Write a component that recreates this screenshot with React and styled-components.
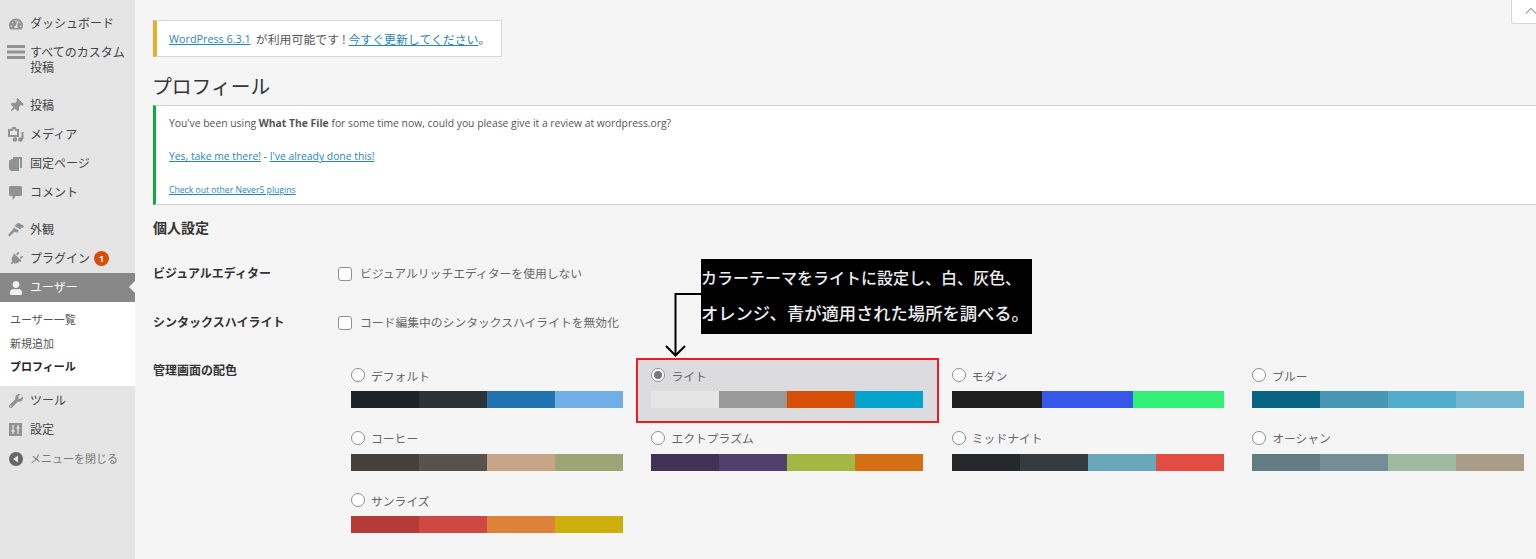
import React from "react";
import styled, { createGlobalStyle } from "styled-components";
import {
  FaTachometerAlt,
  FaThumbtack,
  FaPlug,
  FaUser,
  FaWrench,
} from "react-icons/fa";

const GlobalStyle = createGlobalStyle`
  html, body {
    margin: 0;
    padding: 0;
    background: #f5f5f5;
    font-family: "Open Sans", "Noto Sans CJK JP", sans-serif;
    color: #444;
  }
`;

const Page = styled.div`
  position: relative;
  display: flex;
  width: 1536px;
  height: 559px;
  overflow: hidden;
`;

const Sidebar = styled.nav`
  width: 135px;
  flex-shrink: 0;
  background: #e5e5e5;
  padding-top: 9px;
  box-sizing: border-box;
`;

const MenuItem = styled.div`
  display: flex;
  align-items: ${({ $tall }) => ($tall ? "flex-start" : "center")};
  height: ${({ $tall }) => ($tall ? "43px" : "29px")};
  margin-top: ${({ $gap }) => $gap || 0}px;
  padding-top: ${({ $tall }) => ($tall ? "7px" : "0")};
  box-sizing: border-box;
  position: relative;
  font-size: ${({ $muted }) => ($muted ? "11px" : "12px")};
  line-height: 15px;
  color: ${({ $active, $muted }) => ($active ? "#fff" : $muted ? "#777" : "#444")};
  background: ${({ $active }) => ($active ? "#888" : "transparent")};
  &:after {
    content: "";
    display: ${({ $active }) => ($active ? "block" : "none")};
    position: absolute;
    right: 0;
    top: 8px;
    border: 6px solid transparent;
    border-right-color: #f5f5f5;
    border-left: 0;
  }
`;

const IconSlot = styled.span`
  width: 30px;
  flex-shrink: 0;
  display: flex;
  justify-content: center;
  color: ${({ $active, $dark }) => ($active ? "#f1f1f1" : $dark ? "#666" : "#929292")};
  font-size: 14px;
  padding-left: 1px;
  box-sizing: border-box;
`;

const TiltedPin = styled(FaThumbtack)`
  transform: rotate(45deg);
`;

const TiltedPlug = styled(FaPlug)`
  transform: rotate(45deg);
`;

const Badge = styled.span`
  width: 15px;
  height: 15px;
  border-radius: 50%;
  margin-left: 4px;
  background: #d64e07;
  color: #fff;
  font-size: 9px;
  font-weight: 700;
  line-height: 15px;
  text-align: center;
`;

const Submenu = styled.div`
  background: #fff;
  padding: 6px 0 7px 10px;
`;

const SubItem = styled.div`
  height: 23.7px;
  line-height: 23.7px;
  font-size: 11px;
  color: ${({ $current }) => ($current ? "#222" : "#555")};
  font-weight: ${({ $current }) => ($current ? 700 : 400)};
`;

const Main = styled.main`
  flex: 1;
  min-width: 0;
  padding: 20px 0 0 18px;
`;

const UpdateNotice = styled.div`
  width: 349px;
  height: 37px;
  box-sizing: border-box;
  background: #fff;
  border: 1px solid #d6d6d6;
  border-left: 4px solid #e5ae2f;
  padding-left: 12px;
  display: flex;
  align-items: center;
  font-size: 11.9px;
  color: #555;
  white-space: nowrap;
`;

const Link = styled.a`
  color: #2a86b8;
  text-decoration: underline;
  font-size: ${({ $size }) => ($size ? `${$size}px` : "inherit")};
`;

const NoticeText = styled.span`
  margin-left: 2px;
`;

const Title = styled.h1`
  margin: 15px 0 0 -1px;
  height: 33px;
  font-size: 19.8px;
  line-height: 30px;
  font-weight: 400;
  color: #333;
`;

const ReviewNotice = styled.div`
  height: 100px;
  box-sizing: border-box;
  background: #fff;
  border-top: 1px solid #d0d0d0;
  border-bottom: 1px solid #d0d0d0;
  border-left: 3px solid #0cab3f;
  padding: 7px 0 0 13px;
  font-size: 10.35px;
  color: #555;
`;

const ReviewLine = styled.div`
  height: 33px;
  line-height: 20px;
`;

const SectionTitle = styled.h2`
  margin: 13px 0 0;
  font-size: 14px;
  line-height: 19px;
  font-weight: 700;
  color: #333;
`;

const SettingRow = styled.div`
  display: grid;
  grid-template-columns: 184px 1fr;
  margin-top: ${({ $gap }) => $gap}px;
`;

const RowLabel = styled.div`
  font-size: 12px;
  line-height: 20px;
  font-weight: 700;
  color: #333;
  padding-top: ${({ $pad }) => $pad || 0}px;
`;

const CheckLine = styled.label`
  display: flex;
  align-items: center;
  height: 20px;
  font-size: 11.8px;
  line-height: 18px;
  color: #666;
  padding-left: 1px;
`;

const CheckText = styled.span`
  margin-bottom: 2px;
`;

const Checkbox = styled.span`
  width: 14px;
  height: 14px;
  box-sizing: border-box;
  border: 1px solid #8c8f94;
  border-radius: 3px;
  background: #fff;
  margin-right: 8px;
`;

const SchemeGrid = styled.div`
  display: grid;
  grid-template-columns: repeat(4, 300.4px);
  grid-auto-rows: 62.6px;
`;

const Scheme = styled.div`
  padding: 6px 14.4px 0 14px;
  box-sizing: border-box;
  background: ${({ $selected }) => ($selected ? "#dcdcde" : "transparent")};
  outline: ${({ $selected }) => ($selected ? "2px solid #ed1c24" : "none")};
  outline-offset: -1px;
`;

const SchemeLabel = styled.div`
  display: flex;
  align-items: center;
  height: 20px;
  font-size: 11.8px;
  color: #666;
  margin-bottom: 6px;
`;

const Radio = styled.span`
  width: 14px;
  height: 14px;
  box-sizing: border-box;
  border: 1px solid #8c8f94;
  border-radius: 50%;
  background: #fff;
  margin-right: 6px;
  display: flex;
  align-items: center;
  justify-content: center;
  &:after {
    content: "";
    display: ${({ $checked }) => ($checked ? "block" : "none")};
    width: 8px;
    height: 8px;
    border-radius: 50%;
    background: #777;
  }
`;

const Swatches = styled.div`
  display: flex;
  height: 17px;
`;

const Swatch = styled.div`
  flex: 1;
  background: ${({ $color }) => $color};
`;

const CollapseTab = styled.div`
  position: absolute;
  top: -1px;
  right: -2px;
  width: 27px;
  height: 25px;
  background: #fff;
  border: 1px solid #d6d6d6;
  border-radius: 0 0 0 3px;
  display: flex;
  padding: 7px 0 0 13px;
  box-sizing: border-box;
`;

const Callout = styled.div`
  position: absolute;
  left: 701px;
  top: 259px;
  width: 331px;
  height: 75px;
  box-sizing: border-box;
  background: #000;
  color: #eee;
  font-weight: 500;
  padding-top: 1px;
  white-space: nowrap;
`;

const CalloutLine = styled.div`
  font-size: ${({ $size }) => $size}px;
  line-height: 36px;
`;

const CalloutArrow = styled.svg`
  position: absolute;
  left: 665px;
  top: 290px;
`;

const MediaIcon = () => (
  <svg width="17" height="15" viewBox="0 0 17 15" fill="none" stroke="currentColor" strokeWidth="2">
    <path d="M2 3h3l1-2h2l1 2h2v6H2z" />
    <path d="M15.5 5v7" />
    <circle cx="13.5" cy="12.5" r="1.3" fill="currentColor" />
    <circle cx="8" cy="12.5" r="1.3" fill="currentColor" />
  </svg>
);

const BarsIcon = () => (
  <svg width="18" height="14" viewBox="0 0 18 14" fill="currentColor">
    <rect y="0" width="18" height="3" />
    <rect y="5.5" width="18" height="3" />
    <rect y="11" width="18" height="3" />
  </svg>
);

const PagesIcon = () => (
  <svg width="13" height="14" viewBox="0 0 13 14" fill="currentColor">
    <path d="M4 0h9v11h-2V2H4z" />
    <path d="M0 3.5L3 2h7v12H2L0 12z" />
  </svg>
);

const BubbleIcon = () => (
  <svg width="13" height="14" viewBox="0 0 13 14" fill="currentColor">
    <path d="M1.5 0h10A1.5 1.5 0 0 1 13 1.5v7a1.5 1.5 0 0 1-1.5 1.5H7l-3.5 4v-4h-2A1.5 1.5 0 0 1 0 8.5v-7A1.5 1.5 0 0 1 1.5 0z" />
  </svg>
);

const BrushIcon = () => (
  <svg width="16" height="14" viewBox="0 0 16 14" fill="currentColor">
    <path d="M9 0.5l2-0.5 5 3-1 2-1.5-0.5-1 2-6-3.5z" />
    <path d="M5.8 4.5l5 3-1.5 2.2-2.8-1L1.5 13.5 0 12l4.5-5z" />
  </svg>
);

const SettingsIcon = () => (
  <svg width="13" height="13" viewBox="0 0 13 13">
    <rect width="13" height="13" fill="currentColor" />
    <path d="M4 2v9M9 2v9M2.5 8h3M7.5 5h3" stroke="#e5e5e5" strokeWidth="1.3" />
  </svg>
);

const CollapseIcon = () => (
  <svg width="14" height="14" viewBox="0 0 14 14">
    <circle cx="7" cy="7" r="7" fill="currentColor" />
    <path d="M9 3.5v7L4 7z" fill="#e5e5e5" />
  </svg>
);

const schemes = [
  { name: "デフォルト", colors: ["#1d2327", "#2c3338", "#2271b1", "#72aee6"] },
  { name: "ライト", colors: ["#e5e5e5", "#999999", "#d64e07", "#04a4cc"], selected: true },
  { name: "モダン", colors: ["#1e1e1e", "#3858e9", "#33f078"] },
  { name: "ブルー", colors: ["#096484", "#4796b3", "#52accc", "#74b6ce"] },
  { name: "コーヒー", colors: ["#46403c", "#59524c", "#c7a589", "#9ea476"] },
  { name: "エクトプラズム", colors: ["#413256", "#523f6d", "#a3b745", "#d46f15"] },
  { name: "ミッドナイト", colors: ["#25282b", "#363b3f", "#69a8bb", "#e14d43"] },
  { name: "オーシャン", colors: ["#627c83", "#738e96", "#9ebaa0", "#aa9d88"] },
  { name: "サンライズ", colors: ["#b43c38", "#cf4944", "#dd823b", "#ccaf0b"] },
];

const App = () => {
  return (
    <Page>
      <GlobalStyle />
      <Sidebar>
        <MenuItem><IconSlot><FaTachometerAlt /></IconSlot>ダッシュボード</MenuItem>
        <MenuItem $tall><IconSlot><BarsIcon /></IconSlot><span>すべてのカスタム<br />投稿</span></MenuItem>
        <MenuItem $gap={10}><IconSlot><TiltedPin /></IconSlot>投稿</MenuItem>
        <MenuItem><IconSlot><MediaIcon /></IconSlot>メディア</MenuItem>
        <MenuItem><IconSlot><PagesIcon /></IconSlot>固定ページ</MenuItem>
        <MenuItem><IconSlot><BubbleIcon /></IconSlot>コメント</MenuItem>
        <MenuItem $gap={8}><IconSlot><BrushIcon /></IconSlot>外観</MenuItem>
        <MenuItem><IconSlot><TiltedPlug /></IconSlot>プラグイン<Badge>1</Badge></MenuItem>
        <MenuItem $active><IconSlot $active><FaUser /></IconSlot>ユーザー</MenuItem>
        <Submenu>
          <SubItem>ユーザー一覧</SubItem>
          <SubItem>新規追加</SubItem>
          <SubItem $current>プロフィール</SubItem>
        </Submenu>
        <MenuItem><IconSlot><FaWrench /></IconSlot>ツール</MenuItem>
        <MenuItem><IconSlot><SettingsIcon /></IconSlot>設定</MenuItem>
        <MenuItem $muted><IconSlot $dark><CollapseIcon /></IconSlot>メニューを閉じる</MenuItem>
      </Sidebar>
      <Main>
        <UpdateNotice>
          <Link $size={10.8}>WordPress 6.3.1</Link>
          <NoticeText>&nbsp;が利用可能です !&nbsp;</NoticeText>
          <Link>今すぐ更新してください</Link>。
        </UpdateNotice>
        <Title>プロフィール</Title>
        <ReviewNotice>
          <ReviewLine>You've been using <b>What The File</b> for some time now, could you please give it a review at wordpress.org?</ReviewLine>
          <ReviewLine><Link>Yes, take me there!</Link> - <Link>I've already done this!</Link></ReviewLine>
          <ReviewLine><Link $size={8.65}>Check out other Never5 plugins</Link></ReviewLine>
        </ReviewNotice>
        <SectionTitle>個人設定</SectionTitle>
        <SettingRow $gap={27}>
          <RowLabel>ビジュアルエディター</RowLabel>
          <CheckLine><Checkbox /><CheckText>ビジュアルリッチエディターを使用しない</CheckText></CheckLine>
        </SettingRow>
        <SettingRow $gap={29}>
          <RowLabel>シンタックスハイライト</RowLabel>
          <CheckLine><Checkbox /><CheckText>コード編集中のシンタックスハイライトを無効化</CheckText></CheckLine>
        </SettingRow>
        <SettingRow $gap={26}>
          <RowLabel $pad={2}>管理画面の配色</RowLabel>
          <SchemeGrid>
            {schemes.map((scheme) => (
              <Scheme key={scheme.name} $selected={scheme.selected}>
                <SchemeLabel><Radio $checked={scheme.selected} />{scheme.name}</SchemeLabel>
                <Swatches>
                  {scheme.colors.map((color) => (
                    <Swatch key={color} $color={color} />
                  ))}
                </Swatches>
              </Scheme>
            ))}
          </SchemeGrid>
        </SettingRow>
      </Main>
      <CollapseTab>
        <svg width="14" height="8" viewBox="0 0 14 8" fill="none" stroke="#8a9aa5" strokeWidth="1.2">
          <path d="M1 7l6-6 6 6" />
        </svg>
      </CollapseTab>
      <Callout>
        <CalloutLine $size={16}>カラーテーマをライトに設定し、白、灰色、</CalloutLine>
        <CalloutLine $size={17.3}>オレンジ、青が適用された場所を調べる。</CalloutLine>
      </Callout>
      <CalloutArrow width="38" height="68" viewBox="0 0 38 68" fill="none" stroke="#000" strokeWidth="2">
        <path d="M36 4H10.5V65" />
        <path d="M1 56l9.5 9.5L20 56" />
      </CalloutArrow>
    </Page>
  );
};

export default App;
